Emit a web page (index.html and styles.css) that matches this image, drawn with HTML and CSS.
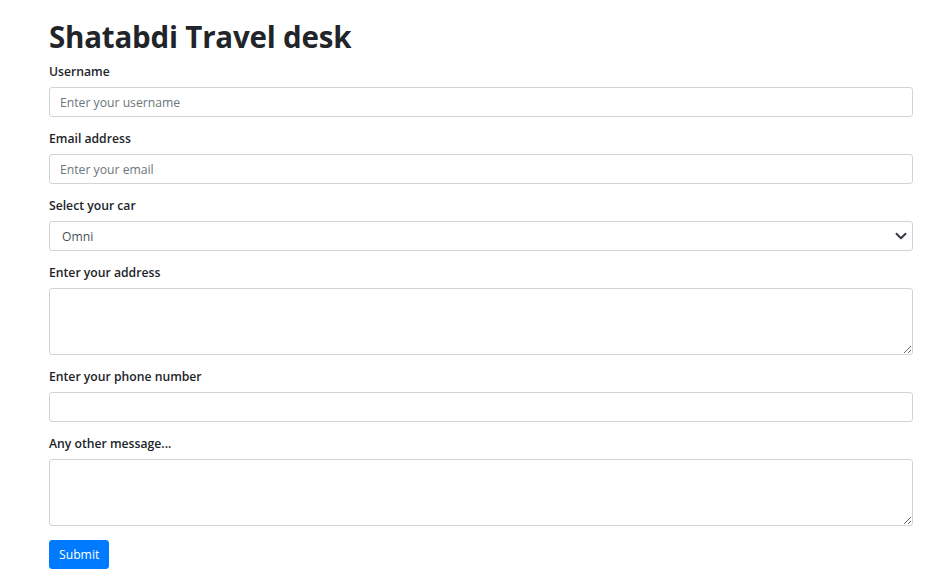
FILE: index.html
```html
<!DOCTYPE html>
<html lang="en">
<head>
    <meta charset="UTF-8">
    <meta name="viewport" content="width=device-width, initial-scale=1.0">
    <title>Shatabdi Travel desk</title>
    <link rel="stylesheet" href="styles.css">
</head>
<body>
    <div class="container">
        <h1>Shatabdi Travel desk</h1>
        <form>
            <div class="form-group">
                <label for="username">Username</label>
                <input type="text" id="username" class="form-control" placeholder="Enter your username">
            </div>
            <div class="form-group">
                <label for="email">Email address</label>
                <input type="email" id="email" class="form-control" placeholder="Enter your email">
            </div>
            <div class="form-group">
                <label for="car">Select your car</label>
                <div class="select-wrap">
                    <select id="car" class="form-control form-select">
                        <option>Omni</option>
                        <option>Swift</option>
                        <option>Innova</option>
                    </select>
                    <svg class="chevron" viewBox="0 0 16 16" width="12" height="12">
                        <path fill="none" stroke="#343a40" stroke-linecap="round" stroke-linejoin="round" stroke-width="2.6" d="m2 5 6 6 6-6"/>
                    </svg>
                </div>
            </div>
            <div class="form-group">
                <label for="address">Enter your address</label>
                <textarea id="address" class="form-control" rows="3"></textarea>
            </div>
            <div class="form-group">
                <label for="phone">Enter your phone number</label>
                <input type="tel" id="phone" class="form-control">
            </div>
            <div class="form-group">
                <label for="message">Any other message...</label>
                <textarea id="message" class="form-control" rows="3"></textarea>
            </div>
            <button type="submit" class="btn">Submit</button>
        </form>
    </div>
</body>
</html>
```

FILE: styles.css
```css
* {
    box-sizing: border-box;
}
body {
    margin: 0;
    font-family: "Open Sans", "Noto Sans", Arial, sans-serif;
    font-size: 12.2px;
    color: #212529;
    background-color: #fff;
}
.container {
    width: 864px;
    margin-left: 49px;
    padding-top: 18px;
}
h1 {
    margin: 0 0 6px;
    font-size: 29.5px;
    font-weight: 700;
    line-height: 38px;
    letter-spacing: -0.2px;
}
.form-group {
    margin-bottom: 12px;
}
label {
    display: block;
    margin-bottom: 6px;
    font-weight: 600;
    line-height: 19px;
}
.form-control {
    display: block;
    width: 100%;
    height: 30px;
    padding: 4px 10px;
    font-family: inherit;
    font-size: 12.2px;
    color: #495057;
    background-color: #fff;
    border: 1px solid #ced4da;
    border-radius: 3px;
    outline: none;
}
.form-control::placeholder {
    color: #6c757d;
}
textarea.form-control {
    height: 67px;
    resize: vertical;
}
.select-wrap {
    position: relative;
}
.form-select {
    appearance: none;
    -webkit-appearance: none;
    padding-left: 12px;
}
.chevron {
    position: absolute;
    right: 6px;
    top: 9px;
    pointer-events: none;
}
.btn {
    display: inline-block;
    height: 29px;
    padding: 0 9px;
    font-family: inherit;
    font-size: 12.2px;
    color: #fff;
    background-color: #007bff;
    border: 1px solid #007bff;
    border-radius: 3px;
    cursor: pointer;
    margin-top: 2px;
}
.btn:hover {
    background-color: #0069d9;
}
```
